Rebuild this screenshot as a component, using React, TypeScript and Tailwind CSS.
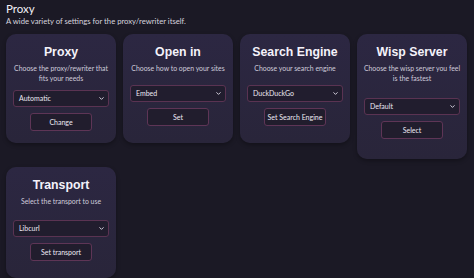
import { ChevronDown } from 'lucide-react'

type Setting = {
  title: string
  desc: string[]
  value: string
  action: string
  selectMt: string
  pb: string
}

const settings: Setting[] = [
  { title: 'Proxy', desc: ['Choose the proxy/rewriter that', 'fits your needs'], value: 'Automatic', action: 'Change', selectMt: 'mt-[7px]', pb: 'pb-[12px]' },
  { title: 'Open in', desc: ['Choose how to open your sites'], value: 'Embed', action: 'Set', selectMt: 'mt-[12px]', pb: 'pb-[17px]' },
  { title: 'Search Engine', desc: ['Choose your search engine'], value: 'DuckDuckGo', action: 'Set Search Engine', selectMt: 'mt-[12px]', pb: 'pb-[17px]' },
  { title: 'Wisp Server', desc: ['Choose the wisp server you feel', 'is the fastest'], value: 'Default', action: 'Select', selectMt: 'mt-[15px]', pb: 'pb-[20px]' },
  { title: 'Transport', desc: ['Select the transport to use'], value: 'Libcurl', action: 'Set transport', selectMt: 'mt-[14px]', pb: 'pb-[17px]' },
]

function SettingCard({ s }: { s: Setting }) {
  return (
    <div
      className={`w-[110px] rounded-[10px] bg-gradient-to-b from-[#2c2742] to-[#29253a] px-[7px] pt-[7px] ${s.pb} flex flex-col items-center shadow-[0_2px_4px_rgba(0,0,0,0.3)]`}
    >
      <h2
        className="text-[12.3px] font-bold leading-[18px] pt-[2px] text-[#f4f2fa] whitespace-nowrap"
        style={{ fontFamily: '"Liberation Sans", Arial, sans-serif' }}
      >
        {s.title}
      </h2>
      <div className="mt-[2px] text-center text-[6.9px] leading-[10px] text-[#cfcbdb] whitespace-nowrap">
        {s.desc.map((line) => (
          <p key={line}>{line}</p>
        ))}
      </div>
      <div
        className={`${s.selectMt} w-full h-[17px] rounded-[3px] border border-[#5a3352] bg-[#211d2e] flex items-center justify-between pl-[5px] pr-[3px]`}
      >
        <span className="text-[7px] text-[#ece9f3]">{s.value}</span>
        <ChevronDown className="size-[7px] text-[#e8e4f0]" strokeWidth={3} />
      </div>
      <button className="mt-[6px] w-[62px] h-[18px] rounded-[3px] border border-[#5e3556] bg-[#211d2d] text-[7px] text-[#ece9f3] whitespace-nowrap">
        {s.action}
      </button>
    </div>
  )
}

export default function App() {
  return (
    <div
      className="w-[474px] h-[278px] overflow-hidden bg-[#1b1925] px-[6px] pt-[1px]"
      style={{ fontFamily: 'Lato, "Noto Sans", sans-serif' }}
    >
      <h1 className="text-[11.5px] leading-[15px] text-[#f2f0f7]">Proxy</h1>
      <p className="text-[7.7px] leading-[11px] text-[#d6d3df]">
        A wide variety of settings for the proxy/rewriter itself.
      </p>
      <div className="mt-[7px] flex flex-wrap items-start gap-x-[7px] gap-y-[8px]">
        {settings.map((s) => (
          <SettingCard key={s.title} s={s} />
        ))}
      </div>
    </div>
  )
}
